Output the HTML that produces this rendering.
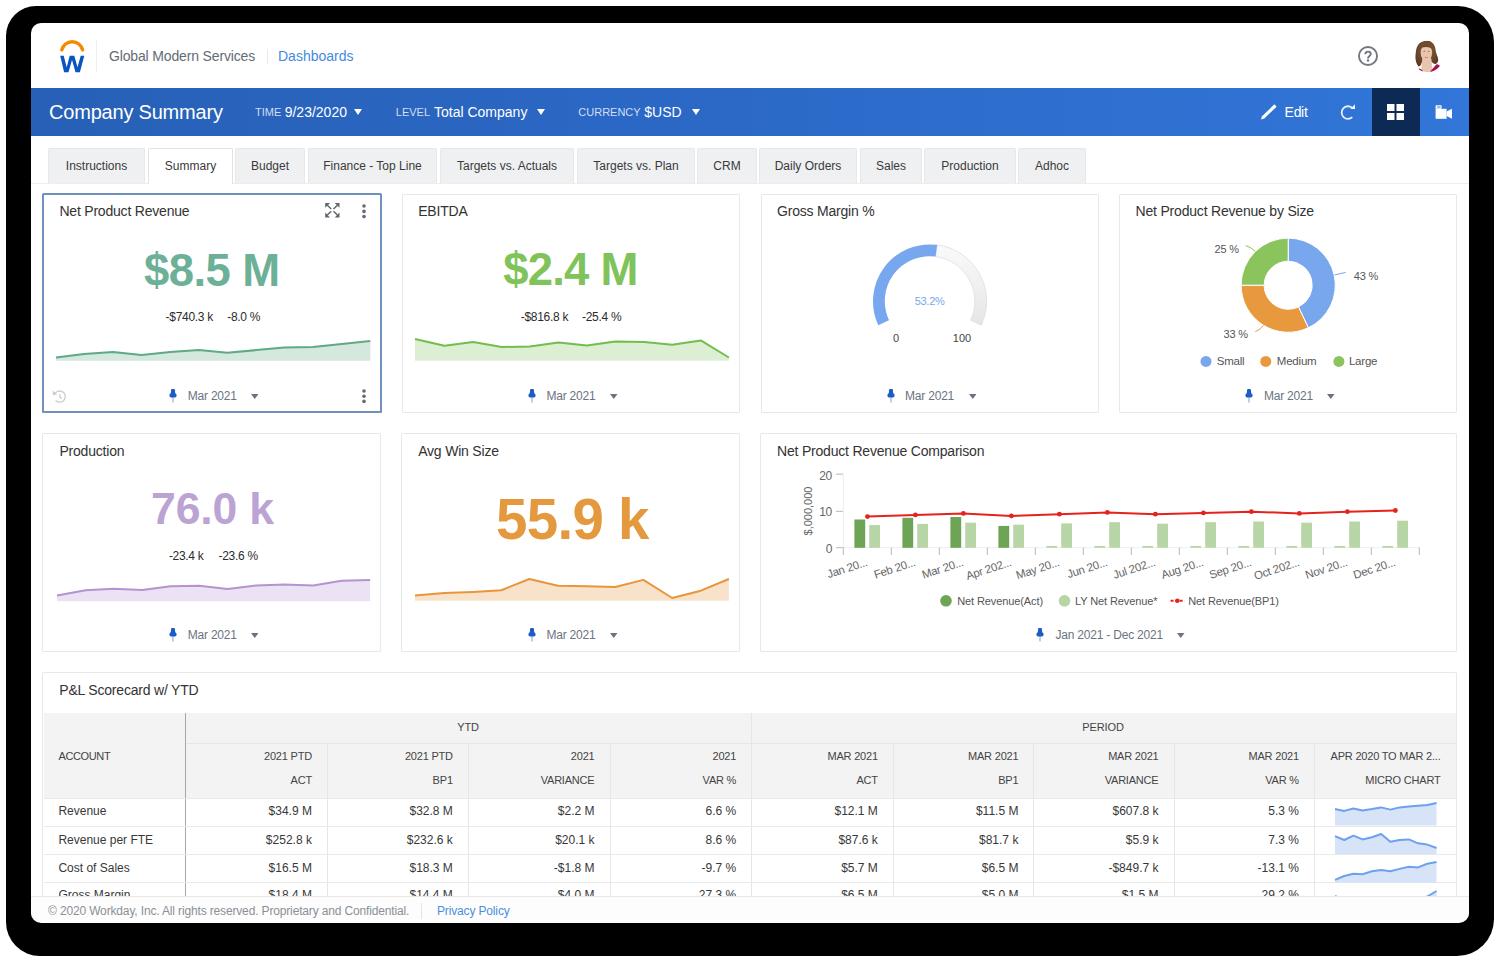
<!DOCTYPE html>
<html><head><meta charset="utf-8">
<style>
*{box-sizing:border-box;margin:0;padding:0}
html,body{width:1500px;height:962px;overflow:hidden;background:#fff;font-family:"Liberation Sans",sans-serif;}
.abs{position:absolute}
#frame{position:absolute;left:6.3px;top:6.4px;width:1487.3px;height:949.6px;background:#000;border-radius:30px 36px 37px 34px}
#win{position:absolute;left:31px;top:23px;width:1438px;height:899.5px;background:#fff;border-radius:10px;overflow:hidden}
.t{position:absolute;white-space:nowrap;line-height:1}
#bar{position:absolute;left:0;top:65px;width:1438px;height:48px;background:linear-gradient(90deg,#2760b6 0%,#2b67c4 40%,#3176d8 100%)}
.tab{position:absolute;top:125px;height:35px;background:#eff0f2;border:1px solid #e6e8eb;border-bottom:none;border-radius:2px 2px 0 0;font-size:12px;color:#3a3a3a;text-align:center;line-height:34.4px}
.tab.on{background:#fff;border-color:#e0e2e5;height:36px}
.card{position:absolute;background:#fff;border:1px solid #e6e8eb;border-radius:2px}
.ctitle{position:absolute;left:16px;top:10px;font-size:14px;color:#333;white-space:nowrap;line-height:16px}
.big{position:absolute;left:0;width:100%;text-align:center;font-weight:bold;white-space:nowrap;line-height:1}
.sub{position:absolute;left:0;width:100%;text-align:center;font-size:12px;color:#222;white-space:nowrap;line-height:14px;letter-spacing:-0.2px}
.foot{position:absolute;left:0;width:100%;text-align:center;font-size:12px;color:#6b737c;white-space:nowrap;line-height:14px}
</style></head><body>
<div id="frame"></div>
<div id="win">
  <!-- header -->
  <svg class="abs" style="left:25px;top:13px" width="34" height="40" viewBox="0 0 34 40">
    <path d="M5.8 13.9 A10.7 10.7 0 0 1 26.6 13.9" fill="none" stroke="#f38a00" stroke-width="3.4" stroke-linecap="round"/>
    <path d="M4.2 19.7 L7.7 19.7 L10.7 31.3 L13.7 19.7 L18.3 19.7 L21.5 31.3 L24.7 19.7 L28.3 19.7 L23.9 36.2 L19.5 36.2 L16 24 L12.5 36.2 L8.1 36.2 Z" fill="#0a56c0"/>
  </svg>
  <div class="abs" style="left:65px;top:17px;width:1px;height:32px;background:#eceef1"></div>
  <div class="t" style="left:78px;top:26px;font-size:14px;color:#636c75;letter-spacing:-0.15px">Global Modern Services</div>
  <div class="abs" style="left:236px;top:25.5px;width:1px;height:15px;background:#e8eaed"></div>
  <div class="t" style="left:247px;top:26px;font-size:14px;color:#3f8be0">Dashboards</div>

  <div id="bar"></div>
  <div class="t" style="left:18px;top:79px;font-size:20px;color:#fff;letter-spacing:-0.2px">Company Summary</div>
  <div class="t" style="left:224px;top:83.8px;font-size:11px;color:#d3def2">TIME</div>
  <div class="t" style="left:253.7px;top:81.9px;font-size:14px;color:#fff">9/23/2020</div>
  <svg class="abs" style="left:322.7px;top:86px" width="8" height="6"><path d="M0 0H8L4 6Z" fill="#fff"/></svg>
  <div class="t" style="left:364.8px;top:83.8px;font-size:11px;color:#d3def2">LEVEL</div>
  <div class="t" style="left:403px;top:81.9px;font-size:14px;color:#fff">Total Company</div>
  <svg class="abs" style="left:505.7px;top:86px" width="8" height="6"><path d="M0 0H8L4 6Z" fill="#fff"/></svg>
  <div class="t" style="left:547.3px;top:83.8px;font-size:11px;color:#d3def2">CURRENCY</div>
  <div class="t" style="left:613.3px;top:81.9px;font-size:14px;color:#fff">$USD</div>
  <svg class="abs" style="left:661.3px;top:86px" width="8" height="6"><path d="M0 0H8L4 6Z" fill="#fff"/></svg>
  <!-- pencil -->
  <svg class="abs" style="left:1228px;top:80.5px" width="18" height="18" viewBox="0 0 18 18"><path d="M2 15.5 L5.27 14.56 L17.61 2.65 L15.39 0.35 L3.05 12.26 Z" fill="#fff"/></svg>
  <div class="t" style="left:1253.6px;top:82.2px;font-size:14px;color:#fff;letter-spacing:-0.3px">Edit</div>
  <!-- refresh -->
  <svg class="abs" style="left:1309px;top:81px" width="16" height="16" viewBox="0 0 16 16"><path d="M12 3.7 A6.3 6.3 0 1 0 12.3 13.1" fill="none" stroke="#e6eefa" stroke-width="1.8"/><path d="M10.6 4.9 L15.1 4.9 L14.8 0.3 Z" fill="#fff"/></svg>
  <div class="abs" style="left:1340.7px;top:65px;width:48px;height:48px;background:#0d2a55"></div>
  <svg class="abs" style="left:1356.3px;top:81px" width="17" height="16" viewBox="0 0 17 16"><rect x="0" y="0" width="7.5" height="7" fill="#fff"/><rect x="9.5" y="0" width="7.5" height="7" fill="#fff"/><rect x="0" y="9" width="7.5" height="7" fill="#fff"/><rect x="9.5" y="9" width="7.5" height="7" fill="#fff"/></svg>
  <!-- camera -->
  <svg class="abs" style="left:1404.4px;top:81.8px" width="18" height="15" viewBox="0 0 18 15"><path d="M0.6 3.8 V1.2 C0.6 0.6 1 0.2 1.6 0.2 H5.8 C6.3 0.2 6.6 0.6 6.6 1 V3.8 Z" fill="#fff"/><rect x="0.6" y="3.8" width="11" height="10" fill="#fff"/><path d="M11.6 6.6 L17 3.8 V13.8 L11.6 11 Z" fill="#fff"/><rect x="2" y="1.2" width="3.6" height="1.6" fill="#3176d8" opacity="0.6"/></svg>
  <!-- help -->
  <svg class="abs" style="left:1326px;top:22px" width="22" height="22" viewBox="0 0 22 22"><circle cx="11" cy="11" r="9.05" fill="none" stroke="#707882" stroke-width="1.9"/><path d="M8.3 9.3 C8.3 7.6 9.5 6.6 11 6.6 C12.6 6.6 13.8 7.6 13.8 9.1 C13.8 10.9 11 11.3 11 13.4" fill="none" stroke="#707882" stroke-width="1.9"/><circle cx="11" cy="15.5" r="1.2" fill="#707882"/></svg>
  <!-- avatar -->
  <svg class="abs" style="left:1377px;top:13px" width="40" height="40" viewBox="0 0 40 40">
    <defs><clipPath id="av"><circle cx="19.5" cy="20.4" r="15.6"/></clipPath>
    <radialGradient id="hairg" cx="0.5" cy="0.4" r="0.6"><stop offset="0" stop-color="#8a623f"/><stop offset="1" stop-color="#5a3a22"/></radialGradient></defs>
    <g clip-path="url(#av)">
      <path d="M10.5 30.5 C7 26 7.2 21 7.8 16.5 C8.3 9 12.5 4.4 18.3 4.4 C24.2 4.4 27.2 9 27.6 14 C28 18.5 30.5 21 30.2 24.5 C29.8 27.8 27.5 28.3 25.5 27.6 L22 24.5 L14.5 24.5 C13.5 27.5 12.5 30.5 10.5 30.5 Z" fill="url(#hairg)"/>
      <path d="M14.3 22.5 L13 36 L24.5 36 L23.4 22.5 Z" fill="#e6c4ae"/>
      <ellipse cx="18.4" cy="16.9" rx="5.7" ry="8.3" fill="#e8c5ad"/>
      <path d="M12.8 12 C14 8 17 7.6 19.5 8 C22 8.5 23.5 10.5 24 13 C22 11 18 10 12.8 12 Z" fill="#6e4a2c"/>
      <path d="M22 36 L23.5 34 L28.5 28.2 C30.5 28.5 32 29.5 33 31 L33 36 Z" fill="#a5104d"/>
      <path d="M11 32.3 L14.6 34.3 L14.2 36 L10 36 Z" fill="#b3175d"/>
      <path d="M16.7 21.3 Q18.4 22 20.1 21.3" stroke="#c88479" stroke-width="1" fill="none"/>
      <ellipse cx="16.3" cy="15.3" rx="1" ry="0.55" fill="#8d6b5c"/><ellipse cx="20.6" cy="15.3" rx="1" ry="0.55" fill="#8d6b5c"/>
    </g>
  </svg>
  <!-- tabs -->
  <div class="abs" style="left:0;top:160px;width:1438px;height:1px;background:#ebedf0"></div>
  <div class="tab" style="left:17px;width:97px">Instructions</div>
  <div class="tab on" style="left:117px;width:85px">Summary</div>
  <div class="tab" style="left:204px;width:70px">Budget</div>
  <div class="tab" style="left:277px;width:129px">Finance - Top Line</div>
  <div class="tab" style="left:409px;width:134px">Targets vs. Actuals</div>
  <div class="tab" style="left:546px;width:118px">Targets vs. Plan</div>
  <div class="tab" style="left:666px;width:60px">CRM</div>
  <div class="tab" style="left:728px;width:98px">Daily Orders</div>
  <div class="tab" style="left:829px;width:62px">Sales</div>
  <div class="tab" style="left:893px;width:92px">Production</div>
  <div class="tab" style="left:987px;width:68px">Adhoc</div>
</div>
<div class="abs" style="left:41.9px;top:193.4px;width:340px;height:220px;background:#fff;border-radius:1.5px;box-shadow:inset 0 0 0 2px #7090bd"></div>
<div class="abs" style="left:401.5px;top:194.3px;width:338.6px;height:218.7px;background:#fff;border-radius:1.5px;box-shadow:inset 0 0 0 1px #e6e8eb"></div>
<div class="abs" style="left:760.5px;top:194.3px;width:338.3px;height:218.7px;background:#fff;border-radius:1.5px;box-shadow:inset 0 0 0 1px #e6e8eb"></div>
<div class="abs" style="left:1118.8px;top:194.3px;width:338.5px;height:218.7px;background:#fff;border-radius:1.5px;box-shadow:inset 0 0 0 1px #e6e8eb"></div>
<div class="abs" style="left:41.8px;top:433.2px;width:339.3px;height:218.5px;background:#fff;border-radius:1.5px;box-shadow:inset 0 0 0 1px #e6e8eb"></div>
<div class="abs" style="left:401.1px;top:433.2px;width:339.3px;height:218.5px;background:#fff;border-radius:1.5px;box-shadow:inset 0 0 0 1px #e6e8eb"></div>
<div class="abs" style="left:759.9px;top:433.2px;width:697.4px;height:218.5px;background:#fff;border-radius:1.5px;box-shadow:inset 0 0 0 1px #e6e8eb"></div>
<div class="abs" style="left:42.2px;top:672.2px;width:1415px;height:240px;background:#fff;border-radius:1.5px;box-shadow:inset 0 0 0 1px #e6e8eb"></div>
<div class="t" style="top:204.15px;font-size:14px;color:#333;letter-spacing:-0.2px;left:59.40px;">Net Product Revenue</div>
<svg class="abs" style="left:325px;top:203.4px" width="15" height="15" viewBox="0 0 15 15" fill="#5f6771" stroke="#5f6771"><path d="M0.2 0 H5 L0.2 4.8 Z" stroke="none"/><path d="M14.5 0 H9.7 L14.5 4.8 Z" stroke="none"/><path d="M0.2 14.4 V9.6 L5 14.4 Z" stroke="none"/><path d="M14.5 14.4 V9.6 L9.7 14.4 Z" stroke="none"/><path d="M2.3 2.3 L6.2 6.1 M12.4 2.3 L8.5 6.1 M2.3 12.1 L6.2 8.3 M12.4 12.1 L8.5 8.3" stroke-width="1.4" fill="none"/></svg>
<svg class="abs" style="left:361.2px;top:202.9px" width="6" height="16.599999999999994"><circle cx="3" cy="3.0" r="1.8" fill="#636b76"/><circle cx="3" cy="8.400000000000006" r="1.8" fill="#636b76"/><circle cx="3" cy="13.599999999999994" r="1.8" fill="#636b76"/></svg>
<div class="t" style="top:247.58px;font-size:45.5px;color:#6cb197;font-weight:700;letter-spacing:-0.6px;left:-288.20px;width:1000px;text-align:center;">$8.5 M</div>
<div class="t" style="top:310.84px;font-size:12px;color:#2b2b2b;letter-spacing:-0.3px;left:165.60px;">-$740.3 k</div>
<div class="t" style="top:310.84px;font-size:12px;color:#2b2b2b;letter-spacing:-0.3px;left:227.20px;">-8.0 %</div>
<svg class="abs" style="left:53.80px;top:338.30px" width="319.30" height="23.80"><polygon points="2.00,22.80 2.00,19.60 30.10,16.00 58.90,14.00 87.50,16.90 116.30,14.00 144.90,12.10 173.40,14.70 202.30,12.10 230.30,9.60 258.90,9.10 287.70,6.00 316.30,3.00 316.30,22.80" fill="#d4e8de"/><polyline points="2.00,19.60 30.10,16.00 58.90,14.00 87.50,16.90 116.30,14.00 144.90,12.10 173.40,14.70 202.30,12.10 230.30,9.60 258.90,9.10 287.70,6.00 316.30,3.00" fill="none" stroke="#5fa985" stroke-width="2" stroke-linejoin="round"/></svg>
<svg class="abs" style="left:52px;top:389px" width="15" height="15" viewBox="0 0 15 15"><path d="M3.2 4.2 A5.6 5.6 0 1 1 3.6 11.5" fill="none" stroke="#c9cdd2" stroke-width="1.3"/><path d="M0.8 1.6 L5.2 5.4 L0.9 6.2 Z" fill="#c9cdd2"/><path d="M7.8 5 V8.3 L10 9.6" fill="none" stroke="#c9cdd2" stroke-width="1.2"/></svg>
<svg class="abs" style="left:168.89999999999998px;top:388.8px" width="8" height="14" viewBox="0 0 8 14"><path d="M2 1.2 Q2 0 3.2 0 H4.8 Q6 0 6 1.2 V3 Q6.2 4.6 7.2 5.3 Q7.7 5.8 7.6 6.7 Q7.4 8.4 6 8.4 H2 Q0.6 8.4 0.4 6.7 Q0.3 5.8 0.8 5.3 Q1.8 4.6 2 3 Z" fill="#1d5cc4"/><path d="M3.6 8.2 H4.4 V13.6 H3.6 Z" fill="#2c68c8" opacity="0.8"/></svg>
<div class="t" style="top:390.04px;font-size:12px;color:#6b7380;letter-spacing:-0.2px;left:187.70px;">Mar 2021</div>
<svg class="abs" style="left:250.9px;top:393.59999999999997px" width="7.5" height="5"><path d="M0 0H7.5L3.75 5Z" fill="#6b7380"/></svg>
<svg class="abs" style="left:361.2px;top:388.2px" width="6" height="16.400000000000034"><circle cx="3" cy="3.0" r="1.8" fill="#636b76"/><circle cx="3" cy="8.199999999999989" r="1.8" fill="#636b76"/><circle cx="3" cy="13.400000000000034" r="1.8" fill="#636b76"/></svg>
<div class="t" style="top:204.15px;font-size:14px;color:#333;letter-spacing:-0.2px;left:418.20px;">EBITDA</div>
<div class="t" style="top:247.48px;font-size:45.5px;color:#80c35a;font-weight:700;letter-spacing:-0.8px;left:70.40px;width:1000px;text-align:center;">$2.4 M</div>
<div class="t" style="top:310.84px;font-size:12px;color:#2b2b2b;letter-spacing:-0.3px;left:520.80px;">-$816.8 k</div>
<div class="t" style="top:310.84px;font-size:12px;color:#2b2b2b;letter-spacing:-0.3px;left:582.00px;">-25.4 %</div>
<svg class="abs" style="left:412.50px;top:336.40px" width="318.90" height="25.70"><polygon points="2.00,24.70 2.00,3.00 31.40,9.80 60.20,6.10 88.80,11.00 116.80,10.50 145.40,6.40 173.80,9.60 202.30,5.40 231.20,6.10 259.20,8.80 287.80,4.40 315.90,21.50 315.90,24.70" fill="#dcefd3"/><polyline points="2.00,3.00 31.40,9.80 60.20,6.10 88.80,11.00 116.80,10.50 145.40,6.40 173.80,9.60 202.30,5.40 231.20,6.10 259.20,8.80 287.80,4.40 315.90,21.50" fill="none" stroke="#72bd4d" stroke-width="2" stroke-linejoin="round"/></svg>
<svg class="abs" style="left:528.3000000000001px;top:388.8px" width="8" height="14" viewBox="0 0 8 14"><path d="M2 1.2 Q2 0 3.2 0 H4.8 Q6 0 6 1.2 V3 Q6.2 4.6 7.2 5.3 Q7.7 5.8 7.6 6.7 Q7.4 8.4 6 8.4 H2 Q0.6 8.4 0.4 6.7 Q0.3 5.8 0.8 5.3 Q1.8 4.6 2 3 Z" fill="#1d5cc4"/><path d="M3.6 8.2 H4.4 V13.6 H3.6 Z" fill="#2c68c8" opacity="0.8"/></svg>
<div class="t" style="top:390.04px;font-size:12px;color:#6b7380;letter-spacing:-0.2px;left:546.40px;">Mar 2021</div>
<svg class="abs" style="left:610.2px;top:393.59999999999997px" width="7.5" height="5"><path d="M0 0H7.5L3.75 5Z" fill="#6b7380"/></svg>
<div class="t" style="top:204.15px;font-size:14px;color:#333;letter-spacing:-0.2px;left:777.00px;">Gross Margin %</div>
<svg class="abs" style="left:0;top:0" width="1500" height="962"><defs><linearGradient id="gg" x1="0" y1="0" x2="0" y2="1"><stop offset="0" stop-color="#fafafa"/><stop offset="1" stop-color="#e6e6e6"/></linearGradient></defs><path d="M937.12 244.87 A56.8 56.8 0 0 1 981.28 325.20 L970.58 320.22 A45 45 0 0 0 935.60 256.57 Z" fill="url(#gg)" stroke="#dedede" stroke-width="0.8"/><path d="M878.32 325.20 A56.8 56.8 0 0 1 937.12 244.87 L935.60 256.57 A45 45 0 0 0 889.02 320.22 Z" fill="#77a7ee"/></svg>
<div class="t" style="top:295.69px;font-size:11px;color:#78a8ee;letter-spacing:-0.3px;left:429.60px;width:1000px;text-align:center;">53.2%</div>
<div class="t" style="top:332.69px;font-size:11px;color:#444;left:396.00px;width:1000px;text-align:center;">0</div>
<div class="t" style="top:332.69px;font-size:11px;color:#444;left:462.00px;width:1000px;text-align:center;">100</div>
<svg class="abs" style="left:887.2px;top:388.8px" width="8" height="14" viewBox="0 0 8 14"><path d="M2 1.2 Q2 0 3.2 0 H4.8 Q6 0 6 1.2 V3 Q6.2 4.6 7.2 5.3 Q7.7 5.8 7.6 6.7 Q7.4 8.4 6 8.4 H2 Q0.6 8.4 0.4 6.7 Q0.3 5.8 0.8 5.3 Q1.8 4.6 2 3 Z" fill="#1d5cc4"/><path d="M3.6 8.2 H4.4 V13.6 H3.6 Z" fill="#2c68c8" opacity="0.8"/></svg>
<div class="t" style="top:390.04px;font-size:12px;color:#6b7380;letter-spacing:-0.2px;left:905.00px;">Mar 2021</div>
<svg class="abs" style="left:968.7px;top:393.59999999999997px" width="7.5" height="5"><path d="M0 0H7.5L3.75 5Z" fill="#6b7380"/></svg>
<div class="t" style="top:204.15px;font-size:14px;color:#333;letter-spacing:-0.2px;left:1135.60px;">Net Product Revenue by Size</div>
<svg class="abs" style="left:0;top:0" width="1500" height="962"><path d="M1288.20 238.10 A47.1 47.1 0 0 1 1308.33 327.78 L1298.46 306.90 A24 24 0 0 0 1288.20 261.20 Z" fill="#78a7ee" stroke="#fff" stroke-width="1"/><path d="M1308.33 327.78 A47.1 47.1 0 0 1 1241.10 285.20 L1264.20 285.20 A24 24 0 0 0 1298.46 306.90 Z" fill="#e8993e" stroke="#fff" stroke-width="1"/><path d="M1241.10 285.20 A47.1 47.1 0 0 1 1288.20 238.10 L1288.20 261.20 A24 24 0 0 0 1264.20 285.20 Z" fill="#8bc35d" stroke="#fff" stroke-width="1"/><path d="M1245.6 245.6 Q1251 247 1255.3 251.4" fill="none" stroke="#8bc35d" stroke-width="1"/><path d="M1334.7 274.9 L1345.7 272.4" fill="none" stroke="#78a7ee" stroke-width="1"/><path d="M1255.3 331.6 Q1260 330 1263.4 325.4" fill="none" stroke="#e8993e" stroke-width="1"/><circle cx="1206" cy="361.4" r="5.5" fill="#78a7ee"/><circle cx="1265.8" cy="361.4" r="5.5" fill="#e8993e"/><circle cx="1338.9" cy="361.4" r="5.5" fill="#8bc35d"/></svg>
<div class="t" style="top:243.89px;font-size:11px;color:#555;letter-spacing:-0.2px;left:1214.50px;">25 %</div>
<div class="t" style="top:270.79px;font-size:11px;color:#555;letter-spacing:-0.2px;left:1353.80px;">43 %</div>
<div class="t" style="top:329.39px;font-size:11px;color:#555;letter-spacing:-0.2px;left:1223.60px;">33 %</div>
<div class="t" style="top:355.77px;font-size:11.5px;color:#555;letter-spacing:-0.2px;left:1216.70px;">Small</div>
<div class="t" style="top:355.77px;font-size:11.5px;color:#555;letter-spacing:-0.2px;left:1276.80px;">Medium</div>
<div class="t" style="top:355.77px;font-size:11.5px;color:#555;letter-spacing:-0.2px;left:1348.90px;">Large</div>
<svg class="abs" style="left:1245.3px;top:388.8px" width="8" height="14" viewBox="0 0 8 14"><path d="M2 1.2 Q2 0 3.2 0 H4.8 Q6 0 6 1.2 V3 Q6.2 4.6 7.2 5.3 Q7.7 5.8 7.6 6.7 Q7.4 8.4 6 8.4 H2 Q0.6 8.4 0.4 6.7 Q0.3 5.8 0.8 5.3 Q1.8 4.6 2 3 Z" fill="#1d5cc4"/><path d="M3.6 8.2 H4.4 V13.6 H3.6 Z" fill="#2c68c8" opacity="0.8"/></svg>
<div class="t" style="top:390.04px;font-size:12px;color:#6b7380;letter-spacing:-0.2px;left:1263.90px;">Mar 2021</div>
<svg class="abs" style="left:1327.4px;top:393.59999999999997px" width="7.5" height="5"><path d="M0 0H7.5L3.75 5Z" fill="#6b7380"/></svg>
<div class="t" style="top:443.65px;font-size:14px;color:#333;letter-spacing:-0.2px;left:59.40px;">Production</div>
<div class="t" style="top:487.43px;font-size:44.5px;color:#bba3d3;font-weight:700;letter-spacing:-0.15px;left:-287.50px;width:1000px;text-align:center;">76.0 k</div>
<div class="t" style="top:550.34px;font-size:12px;color:#2b2b2b;letter-spacing:-0.3px;left:168.90px;">-23.4 k</div>
<div class="t" style="top:550.34px;font-size:12px;color:#2b2b2b;letter-spacing:-0.3px;left:218.50px;">-23.6 %</div>
<svg class="abs" style="left:54.50px;top:576.90px" width="318.10" height="25.20"><polygon points="2.00,24.20 2.00,18.60 30.60,13.20 58.70,11.80 87.20,13.00 115.60,9.30 144.20,8.80 172.70,12.00 201.10,8.60 229.60,7.40 258.20,8.60 286.60,3.70 315.10,3.00 315.10,24.20" fill="#ebe2f3"/><polyline points="2.00,18.60 30.60,13.20 58.70,11.80 87.20,13.00 115.60,9.30 144.20,8.80 172.70,12.00 201.10,8.60 229.60,7.40 258.20,8.60 286.60,3.70 315.10,3.00" fill="none" stroke="#b593d0" stroke-width="2" stroke-linejoin="round"/></svg>
<svg class="abs" style="left:168.89999999999998px;top:627.8000000000001px" width="8" height="14" viewBox="0 0 8 14"><path d="M2 1.2 Q2 0 3.2 0 H4.8 Q6 0 6 1.2 V3 Q6.2 4.6 7.2 5.3 Q7.7 5.8 7.6 6.7 Q7.4 8.4 6 8.4 H2 Q0.6 8.4 0.4 6.7 Q0.3 5.8 0.8 5.3 Q1.8 4.6 2 3 Z" fill="#1d5cc4"/><path d="M3.6 8.2 H4.4 V13.6 H3.6 Z" fill="#2c68c8" opacity="0.8"/></svg>
<div class="t" style="top:629.04px;font-size:12px;color:#6b7380;letter-spacing:-0.2px;left:187.70px;">Mar 2021</div>
<svg class="abs" style="left:250.9px;top:632.6px" width="7.5" height="5"><path d="M0 0H7.5L3.75 5Z" fill="#6b7380"/></svg>
<div class="t" style="top:443.65px;font-size:14px;color:#333;letter-spacing:-0.2px;left:418.20px;">Avg Win Size</div>
<div class="t" style="top:491.57px;font-size:56.5px;color:#e4993e;font-weight:700;letter-spacing:-0.75px;left:72.40px;width:1000px;text-align:center;">55.9 k</div>
<svg class="abs" style="left:412.50px;top:576.40px" width="318.90" height="25.70"><polygon points="2.00,24.70 2.00,19.60 31.40,17.10 60.20,15.90 88.30,14.20 116.40,3.00 144.90,9.80 173.80,10.30 202.30,11.00 230.40,3.90 259.20,22.00 287.80,14.70 315.90,3.00 315.90,24.70" fill="#f8e2ca"/><polyline points="2.00,19.60 31.40,17.10 60.20,15.90 88.30,14.20 116.40,3.00 144.90,9.80 173.80,10.30 202.30,11.00 230.40,3.90 259.20,22.00 287.80,14.70 315.90,3.00" fill="none" stroke="#e8953b" stroke-width="2" stroke-linejoin="round"/></svg>
<svg class="abs" style="left:528.3000000000001px;top:627.8000000000001px" width="8" height="14" viewBox="0 0 8 14"><path d="M2 1.2 Q2 0 3.2 0 H4.8 Q6 0 6 1.2 V3 Q6.2 4.6 7.2 5.3 Q7.7 5.8 7.6 6.7 Q7.4 8.4 6 8.4 H2 Q0.6 8.4 0.4 6.7 Q0.3 5.8 0.8 5.3 Q1.8 4.6 2 3 Z" fill="#1d5cc4"/><path d="M3.6 8.2 H4.4 V13.6 H3.6 Z" fill="#2c68c8" opacity="0.8"/></svg>
<div class="t" style="top:629.04px;font-size:12px;color:#6b7380;letter-spacing:-0.2px;left:546.40px;">Mar 2021</div>
<svg class="abs" style="left:610.2px;top:632.6px" width="7.5" height="5"><path d="M0 0H7.5L3.75 5Z" fill="#6b7380"/></svg>
<div class="t" style="top:443.65px;font-size:14px;color:#333;letter-spacing:-0.2px;left:777.00px;">Net Product Revenue Comparison</div>
<svg class="abs" style="left:0;top:0" width="1500" height="962">
<text x="807.8" y="511" transform="rotate(-90 807.8 511)" text-anchor="middle" dominant-baseline="central" font-family="Liberation Sans" font-size="11" fill="#666">$,000,000</text>
<text x="832" y="480.0" text-anchor="end" font-family="Liberation Sans" font-size="12" fill="#666" letter-spacing="-0.3">20</text>
<text x="832" y="516.0" text-anchor="end" font-family="Liberation Sans" font-size="12" fill="#666" letter-spacing="-0.3">10</text>
<text x="832" y="552.5" text-anchor="end" font-family="Liberation Sans" font-size="12" fill="#666" letter-spacing="-0.3">0</text>
<line x1="836" y1="474.2" x2="843.4" y2="474.2" stroke="#c4c4c4" stroke-width="1.2"/>
<line x1="836" y1="511.4" x2="843.4" y2="511.4" stroke="#c4c4c4" stroke-width="1.2"/>
<line x1="836" y1="547.6" x2="843.4" y2="547.6" stroke="#c4c4c4" stroke-width="1.2"/>
<line x1="843.4" y1="474" x2="843.4" y2="547.6" stroke="#efefef" stroke-width="1"/>
<line x1="843.4" y1="547.6" x2="1419.5" y2="547.6" stroke="#efefef" stroke-width="1"/>
<line x1="843.4" y1="547.6" x2="843.4" y2="555" stroke="#c4c4c4" stroke-width="1.2"/>
<line x1="891.4" y1="547.6" x2="891.4" y2="555" stroke="#c4c4c4" stroke-width="1.2"/>
<line x1="939.4" y1="547.6" x2="939.4" y2="555" stroke="#c4c4c4" stroke-width="1.2"/>
<line x1="987.4" y1="547.6" x2="987.4" y2="555" stroke="#c4c4c4" stroke-width="1.2"/>
<line x1="1035.4" y1="547.6" x2="1035.4" y2="555" stroke="#c4c4c4" stroke-width="1.2"/>
<line x1="1083.4" y1="547.6" x2="1083.4" y2="555" stroke="#c4c4c4" stroke-width="1.2"/>
<line x1="1131.4" y1="547.6" x2="1131.4" y2="555" stroke="#c4c4c4" stroke-width="1.2"/>
<line x1="1179.4" y1="547.6" x2="1179.4" y2="555" stroke="#c4c4c4" stroke-width="1.2"/>
<line x1="1227.4" y1="547.6" x2="1227.4" y2="555" stroke="#c4c4c4" stroke-width="1.2"/>
<line x1="1275.4" y1="547.6" x2="1275.4" y2="555" stroke="#c4c4c4" stroke-width="1.2"/>
<line x1="1323.4" y1="547.6" x2="1323.4" y2="555" stroke="#c4c4c4" stroke-width="1.2"/>
<line x1="1371.4" y1="547.6" x2="1371.4" y2="555" stroke="#c4c4c4" stroke-width="1.2"/>
<line x1="1419.4" y1="547.6" x2="1419.4" y2="555" stroke="#c4c4c4" stroke-width="1.2"/>
<rect x="854.40" y="519.5" width="10.8" height="28.30" fill="#6ea456"/>
<rect x="869.20" y="525.1" width="10.8" height="22.70" fill="#b8d5a5"/>
<text x="868.00" y="565.5" transform="rotate(-18 868.00 565.5)" text-anchor="end" font-family="Liberation Sans" font-size="11.5" fill="#666" letter-spacing="-0.3">Jan 20...</text>
<rect x="902.40" y="517.8" width="10.8" height="30.00" fill="#6ea456"/>
<rect x="917.20" y="523.9" width="10.8" height="23.90" fill="#b8d5a5"/>
<text x="916.00" y="565.5" transform="rotate(-18 916.00 565.5)" text-anchor="end" font-family="Liberation Sans" font-size="11.5" fill="#666" letter-spacing="-0.3">Feb 20...</text>
<rect x="950.40" y="517" width="10.8" height="30.80" fill="#6ea456"/>
<rect x="965.20" y="522.7" width="10.8" height="25.10" fill="#b8d5a5"/>
<text x="964.00" y="565.5" transform="rotate(-18 964.00 565.5)" text-anchor="end" font-family="Liberation Sans" font-size="11.5" fill="#666" letter-spacing="-0.3">Mar 20...</text>
<rect x="998.40" y="525.9" width="10.8" height="21.90" fill="#6ea456"/>
<rect x="1013.20" y="524.7" width="10.8" height="23.10" fill="#b8d5a5"/>
<text x="1012.00" y="565.5" transform="rotate(-18 1012.00 565.5)" text-anchor="end" font-family="Liberation Sans" font-size="11.5" fill="#666" letter-spacing="-0.3">Apr 202...</text>
<rect x="1046.40" y="546" width="10.8" height="1.80" fill="#bcd5a8"/>
<rect x="1061.20" y="523.4" width="10.8" height="24.40" fill="#b8d5a5"/>
<text x="1060.00" y="565.5" transform="rotate(-18 1060.00 565.5)" text-anchor="end" font-family="Liberation Sans" font-size="11.5" fill="#666" letter-spacing="-0.3">May 20...</text>
<rect x="1094.40" y="546" width="10.8" height="1.80" fill="#bcd5a8"/>
<rect x="1109.20" y="522.2" width="10.8" height="25.60" fill="#b8d5a5"/>
<text x="1108.00" y="565.5" transform="rotate(-18 1108.00 565.5)" text-anchor="end" font-family="Liberation Sans" font-size="11.5" fill="#666" letter-spacing="-0.3">Jun 20...</text>
<rect x="1142.40" y="546" width="10.8" height="1.80" fill="#bcd5a8"/>
<rect x="1157.20" y="523.7" width="10.8" height="24.10" fill="#b8d5a5"/>
<text x="1156.00" y="565.5" transform="rotate(-18 1156.00 565.5)" text-anchor="end" font-family="Liberation Sans" font-size="11.5" fill="#666" letter-spacing="-0.3">Jul 202...</text>
<rect x="1190.40" y="546" width="10.8" height="1.80" fill="#bcd5a8"/>
<rect x="1205.20" y="522.2" width="10.8" height="25.60" fill="#b8d5a5"/>
<text x="1204.00" y="565.5" transform="rotate(-18 1204.00 565.5)" text-anchor="end" font-family="Liberation Sans" font-size="11.5" fill="#666" letter-spacing="-0.3">Aug 20...</text>
<rect x="1238.40" y="546" width="10.8" height="1.80" fill="#bcd5a8"/>
<rect x="1253.20" y="521.5" width="10.8" height="26.30" fill="#b8d5a5"/>
<text x="1252.00" y="565.5" transform="rotate(-18 1252.00 565.5)" text-anchor="end" font-family="Liberation Sans" font-size="11.5" fill="#666" letter-spacing="-0.3">Sep 20...</text>
<rect x="1286.40" y="546" width="10.8" height="1.80" fill="#bcd5a8"/>
<rect x="1301.20" y="522.7" width="10.8" height="25.10" fill="#b8d5a5"/>
<text x="1300.00" y="565.5" transform="rotate(-18 1300.00 565.5)" text-anchor="end" font-family="Liberation Sans" font-size="11.5" fill="#666" letter-spacing="-0.3">Oct 202...</text>
<rect x="1334.40" y="546" width="10.8" height="1.80" fill="#bcd5a8"/>
<rect x="1349.20" y="521.5" width="10.8" height="26.30" fill="#b8d5a5"/>
<text x="1348.00" y="565.5" transform="rotate(-18 1348.00 565.5)" text-anchor="end" font-family="Liberation Sans" font-size="11.5" fill="#666" letter-spacing="-0.3">Nov 20...</text>
<rect x="1382.40" y="546" width="10.8" height="1.80" fill="#bcd5a8"/>
<rect x="1397.20" y="520.7" width="10.8" height="27.10" fill="#b8d5a5"/>
<text x="1396.00" y="565.5" transform="rotate(-18 1396.00 565.5)" text-anchor="end" font-family="Liberation Sans" font-size="11.5" fill="#666" letter-spacing="-0.3">Dec 20...</text>
<polyline points="867.40,516.6 915.40,514.9 963.40,513.4 1011.40,515.9 1059.40,514.2 1107.40,512.4 1155.40,514.2 1203.40,512.9 1251.40,511.7 1299.40,513.4 1347.40,511.7 1395.40,510.5" fill="none" stroke="#e5231d" stroke-width="2"/>
<circle cx="867.40" cy="516.6" r="2.4" fill="#e5231d"/>
<circle cx="915.40" cy="514.9" r="2.4" fill="#e5231d"/>
<circle cx="963.40" cy="513.4" r="2.4" fill="#e5231d"/>
<circle cx="1011.40" cy="515.9" r="2.4" fill="#e5231d"/>
<circle cx="1059.40" cy="514.2" r="2.4" fill="#e5231d"/>
<circle cx="1107.40" cy="512.4" r="2.4" fill="#e5231d"/>
<circle cx="1155.40" cy="514.2" r="2.4" fill="#e5231d"/>
<circle cx="1203.40" cy="512.9" r="2.4" fill="#e5231d"/>
<circle cx="1251.40" cy="511.7" r="2.4" fill="#e5231d"/>
<circle cx="1299.40" cy="513.4" r="2.4" fill="#e5231d"/>
<circle cx="1347.40" cy="511.7" r="2.4" fill="#e5231d"/>
<circle cx="1395.40" cy="510.5" r="2.4" fill="#e5231d"/>
<circle cx="946" cy="600.8" r="5.8" fill="#6ea456"/><circle cx="1064.5" cy="600.8" r="5.8" fill="#b5d5a3"/>
<line x1="1170.6" y1="600.8" x2="1184.2" y2="600.8" stroke="#e5231d" stroke-width="2" stroke-dasharray="3 1.5"/><circle cx="1177.4" cy="600.8" r="2.2" fill="#e5231d"/>
</svg>
<div class="t" style="top:595.89px;font-size:11px;color:#555;letter-spacing:-0.1px;left:957.20px;">Net Revenue(Act)</div>
<div class="t" style="top:595.89px;font-size:11px;color:#555;letter-spacing:-0.1px;left:1075.00px;">LY Net Revenue*</div>
<div class="t" style="top:595.89px;font-size:11px;color:#555;letter-spacing:-0.1px;left:1188.20px;">Net Revenue(BP1)</div>
<svg class="abs" style="left:1035.6000000000001px;top:627.8000000000001px" width="8" height="14" viewBox="0 0 8 14"><path d="M2 1.2 Q2 0 3.2 0 H4.8 Q6 0 6 1.2 V3 Q6.2 4.6 7.2 5.3 Q7.7 5.8 7.6 6.7 Q7.4 8.4 6 8.4 H2 Q0.6 8.4 0.4 6.7 Q0.3 5.8 0.8 5.3 Q1.8 4.6 2 3 Z" fill="#1d5cc4"/><path d="M3.6 8.2 H4.4 V13.6 H3.6 Z" fill="#2c68c8" opacity="0.8"/></svg>
<div class="t" style="top:629.04px;font-size:12px;color:#6b7380;letter-spacing:-0.2px;left:1055.40px;">Jan 2021 - Dec 2021</div>
<svg class="abs" style="left:1177px;top:632.6px" width="7.5" height="5"><path d="M0 0H7.5L3.75 5Z" fill="#6b7380"/></svg>
<div class="t" style="top:683.15px;font-size:14px;color:#333;letter-spacing:-0.2px;left:59.30px;">P&amp;L Scorecard w/ YTD</div>
<div class="abs" style="left:0;top:0;width:1500px;height:896.7px;overflow:hidden">
<div class="abs" style="left:43.5px;top:713px;width:1412.5px;height:85px;background:#f3f3f3"></div>
<div class="abs" style="left:185.4px;top:742.5px;width:1270.6px;height:1px;background:#e6e6e6"></div>
<div class="abs" style="left:326.9px;top:743px;width:1px;height:170px;background:#e6e6e6"></div>
<div class="abs" style="left:467.8px;top:743px;width:1px;height:170px;background:#e6e6e6"></div>
<div class="abs" style="left:609.5px;top:743px;width:1px;height:170px;background:#e6e6e6"></div>
<div class="abs" style="left:751.2px;top:743px;width:1px;height:170px;background:#e6e6e6"></div>
<div class="abs" style="left:892.8px;top:743px;width:1px;height:170px;background:#e6e6e6"></div>
<div class="abs" style="left:1033.4px;top:743px;width:1px;height:170px;background:#e6e6e6"></div>
<div class="abs" style="left:1173.5px;top:743px;width:1px;height:170px;background:#e6e6e6"></div>
<div class="abs" style="left:1313.9px;top:743px;width:1px;height:170px;background:#e6e6e6"></div>
<div class="abs" style="left:751.2px;top:713px;width:1px;height:30px;background:#e6e6e6"></div>
<div class="abs" style="left:184.6px;top:713px;width:1.7px;height:200px;background:#a6a6a6"></div>
<div class="abs" style="left:43.5px;top:797.8px;width:1412.5px;height:1px;background:#e9e9e9"></div>
<div class="abs" style="left:43.5px;top:826.2px;width:1412.5px;height:1px;background:#e9e9e9"></div>
<div class="abs" style="left:43.5px;top:854.0px;width:1412.5px;height:1px;background:#e9e9e9"></div>
<div class="abs" style="left:43.5px;top:881.8px;width:1412.5px;height:1px;background:#e9e9e9"></div>
<div class="t" style="top:721.69px;font-size:11px;color:#444;letter-spacing:-0.1px;left:-32.00px;width:1000px;text-align:center;">YTD</div>
<div class="t" style="top:721.69px;font-size:11px;color:#444;letter-spacing:-0.1px;left:603.00px;width:1000px;text-align:center;">PERIOD</div>
<div class="t" style="top:750.69px;font-size:11px;color:#444;letter-spacing:-0.35px;left:58.40px;">ACCOUNT</div>
<div class="t" style="top:750.69px;font-size:11px;color:#444;letter-spacing:-0.2px;left:-688.10px;width:1000px;text-align:right;">2021 PTD</div>
<div class="t" style="top:774.69px;font-size:11px;color:#444;letter-spacing:-0.2px;left:-688.10px;width:1000px;text-align:right;">ACT</div>
<div class="t" style="top:750.69px;font-size:11px;color:#444;letter-spacing:-0.2px;left:-547.20px;width:1000px;text-align:right;">2021 PTD</div>
<div class="t" style="top:774.69px;font-size:11px;color:#444;letter-spacing:-0.2px;left:-547.20px;width:1000px;text-align:right;">BP1</div>
<div class="t" style="top:750.69px;font-size:11px;color:#444;letter-spacing:-0.2px;left:-405.50px;width:1000px;text-align:right;">2021</div>
<div class="t" style="top:774.69px;font-size:11px;color:#444;letter-spacing:-0.2px;left:-405.50px;width:1000px;text-align:right;">VARIANCE</div>
<div class="t" style="top:750.69px;font-size:11px;color:#444;letter-spacing:-0.2px;left:-263.80px;width:1000px;text-align:right;">2021</div>
<div class="t" style="top:774.69px;font-size:11px;color:#444;letter-spacing:-0.2px;left:-263.80px;width:1000px;text-align:right;">VAR %</div>
<div class="t" style="top:750.69px;font-size:11px;color:#444;letter-spacing:-0.2px;left:-122.20px;width:1000px;text-align:right;">MAR 2021</div>
<div class="t" style="top:774.69px;font-size:11px;color:#444;letter-spacing:-0.2px;left:-122.20px;width:1000px;text-align:right;">ACT</div>
<div class="t" style="top:750.69px;font-size:11px;color:#444;letter-spacing:-0.2px;left:18.40px;width:1000px;text-align:right;">MAR 2021</div>
<div class="t" style="top:774.69px;font-size:11px;color:#444;letter-spacing:-0.2px;left:18.40px;width:1000px;text-align:right;">BP1</div>
<div class="t" style="top:750.69px;font-size:11px;color:#444;letter-spacing:-0.2px;left:158.50px;width:1000px;text-align:right;">MAR 2021</div>
<div class="t" style="top:774.69px;font-size:11px;color:#444;letter-spacing:-0.2px;left:158.50px;width:1000px;text-align:right;">VARIANCE</div>
<div class="t" style="top:750.69px;font-size:11px;color:#444;letter-spacing:-0.2px;left:298.90px;width:1000px;text-align:right;">MAR 2021</div>
<div class="t" style="top:774.69px;font-size:11px;color:#444;letter-spacing:-0.2px;left:298.90px;width:1000px;text-align:right;">VAR %</div>
<div class="t" style="top:750.69px;font-size:11px;color:#444;letter-spacing:-0.2px;left:440.50px;width:1000px;text-align:right;">APR 2020 TO MAR 2...</div>
<div class="t" style="top:774.69px;font-size:11px;color:#444;letter-spacing:-0.2px;left:440.50px;width:1000px;text-align:right;">MICRO CHART</div>
<div class="t" style="top:805.24px;font-size:12px;color:#383838;left:58.40px;">Revenue</div>
<div class="t" style="top:805.24px;font-size:12px;color:#383838;left:-688.10px;width:1000px;text-align:right;">$34.9 M</div>
<div class="t" style="top:805.24px;font-size:12px;color:#383838;left:-547.20px;width:1000px;text-align:right;">$32.8 M</div>
<div class="t" style="top:805.24px;font-size:12px;color:#383838;left:-405.50px;width:1000px;text-align:right;">$2.2 M</div>
<div class="t" style="top:805.24px;font-size:12px;color:#383838;left:-263.80px;width:1000px;text-align:right;">6.6 %</div>
<div class="t" style="top:805.24px;font-size:12px;color:#383838;left:-122.20px;width:1000px;text-align:right;">$12.1 M</div>
<div class="t" style="top:805.24px;font-size:12px;color:#383838;left:18.40px;width:1000px;text-align:right;">$11.5 M</div>
<div class="t" style="top:805.24px;font-size:12px;color:#383838;left:158.50px;width:1000px;text-align:right;">$607.8 k</div>
<div class="t" style="top:805.24px;font-size:12px;color:#383838;left:298.90px;width:1000px;text-align:right;">5.3 %</div>
<div class="t" style="top:834.04px;font-size:12px;color:#383838;left:58.40px;">Revenue per FTE</div>
<div class="t" style="top:834.04px;font-size:12px;color:#383838;left:-688.10px;width:1000px;text-align:right;">$252.8 k</div>
<div class="t" style="top:834.04px;font-size:12px;color:#383838;left:-547.20px;width:1000px;text-align:right;">$232.6 k</div>
<div class="t" style="top:834.04px;font-size:12px;color:#383838;left:-405.50px;width:1000px;text-align:right;">$20.1 k</div>
<div class="t" style="top:834.04px;font-size:12px;color:#383838;left:-263.80px;width:1000px;text-align:right;">8.6 %</div>
<div class="t" style="top:834.04px;font-size:12px;color:#383838;left:-122.20px;width:1000px;text-align:right;">$87.6 k</div>
<div class="t" style="top:834.04px;font-size:12px;color:#383838;left:18.40px;width:1000px;text-align:right;">$81.7 k</div>
<div class="t" style="top:834.04px;font-size:12px;color:#383838;left:158.50px;width:1000px;text-align:right;">$5.9 k</div>
<div class="t" style="top:834.04px;font-size:12px;color:#383838;left:298.90px;width:1000px;text-align:right;">7.3 %</div>
<div class="t" style="top:861.64px;font-size:12px;color:#383838;left:58.40px;">Cost of Sales</div>
<div class="t" style="top:861.64px;font-size:12px;color:#383838;left:-688.10px;width:1000px;text-align:right;">$16.5 M</div>
<div class="t" style="top:861.64px;font-size:12px;color:#383838;left:-547.20px;width:1000px;text-align:right;">$18.3 M</div>
<div class="t" style="top:861.64px;font-size:12px;color:#383838;left:-405.50px;width:1000px;text-align:right;">-$1.8 M</div>
<div class="t" style="top:861.64px;font-size:12px;color:#383838;left:-263.80px;width:1000px;text-align:right;">-9.7 %</div>
<div class="t" style="top:861.64px;font-size:12px;color:#383838;left:-122.20px;width:1000px;text-align:right;">$5.7 M</div>
<div class="t" style="top:861.64px;font-size:12px;color:#383838;left:18.40px;width:1000px;text-align:right;">$6.5 M</div>
<div class="t" style="top:861.64px;font-size:12px;color:#383838;left:158.50px;width:1000px;text-align:right;">-$849.7 k</div>
<div class="t" style="top:861.64px;font-size:12px;color:#383838;left:298.90px;width:1000px;text-align:right;">-13.1 %</div>
<div class="t" style="top:888.84px;font-size:12px;color:#383838;left:58.40px;">Gross Margin</div>
<div class="t" style="top:888.84px;font-size:12px;color:#383838;left:-688.10px;width:1000px;text-align:right;">$18.4 M</div>
<div class="t" style="top:888.84px;font-size:12px;color:#383838;left:-547.20px;width:1000px;text-align:right;">$14.4 M</div>
<div class="t" style="top:888.84px;font-size:12px;color:#383838;left:-405.50px;width:1000px;text-align:right;">$4.0 M</div>
<div class="t" style="top:888.84px;font-size:12px;color:#383838;left:-263.80px;width:1000px;text-align:right;">27.3 %</div>
<div class="t" style="top:888.84px;font-size:12px;color:#383838;left:-122.20px;width:1000px;text-align:right;">$6.5 M</div>
<div class="t" style="top:888.84px;font-size:12px;color:#383838;left:18.40px;width:1000px;text-align:right;">$5.0 M</div>
<div class="t" style="top:888.84px;font-size:12px;color:#383838;left:158.50px;width:1000px;text-align:right;">$1.5 M</div>
<div class="t" style="top:888.84px;font-size:12px;color:#383838;left:298.90px;width:1000px;text-align:right;">29.2 %</div>
<svg class="abs" style="left:1332.70px;top:799.90px" width="106.53" height="26.50"><polygon points="2.00,25.50 2.00,9.10 11.23,10.90 20.46,8.50 29.69,10.40 38.92,9.10 48.15,7.40 57.38,9.60 66.61,7.40 75.84,6.60 85.07,5.70 94.30,4.90 103.53,3.00 103.53,25.50" fill="#d7e4f8"/><polyline points="2.00,9.10 11.23,10.90 20.46,8.50 29.69,10.40 38.92,9.10 48.15,7.40 57.38,9.60 66.61,7.40 75.84,6.60 85.07,5.70 94.30,4.90 103.53,3.00" fill="none" stroke="#6da0ee" stroke-width="2" stroke-linejoin="round"/></svg>
<svg class="abs" style="left:1332.70px;top:831.30px" width="106.53" height="24.30"><polygon points="2.00,23.30 2.00,5.20 11.23,9.00 20.46,4.60 29.69,8.40 38.92,6.30 48.15,3.00 57.38,10.80 66.61,9.00 75.84,8.40 85.07,12.30 94.30,13.60 103.53,17.00 103.53,23.30" fill="#d7e4f8"/><polyline points="2.00,5.20 11.23,9.00 20.46,4.60 29.69,8.40 38.92,6.30 48.15,3.00 57.38,10.80 66.61,9.00 75.84,8.40 85.07,12.30 94.30,13.60 103.53,17.00" fill="none" stroke="#6da0ee" stroke-width="2" stroke-linejoin="round"/></svg>
<svg class="abs" style="left:1332.70px;top:858.80px" width="106.53" height="24.70"><polygon points="2.00,23.70 2.00,20.80 11.23,17.00 20.46,14.80 29.69,15.30 38.92,12.30 48.15,11.00 57.38,12.30 66.61,9.90 75.84,7.70 85.07,8.40 94.30,4.70 103.53,3.00 103.53,23.70" fill="#d7e4f8"/><polyline points="2.00,20.80 11.23,17.00 20.46,14.80 29.69,15.30 38.92,12.30 48.15,11.00 57.38,12.30 66.61,9.90 75.84,7.70 85.07,8.40 94.30,4.70 103.53,3.00" fill="none" stroke="#6da0ee" stroke-width="2" stroke-linejoin="round"/></svg>
<svg class="abs" style="left:1332.70px;top:888.00px" width="106.53" height="23.70"><polygon points="2.00,22.70 2.00,8.00 11.23,12.00 20.46,13.00 29.69,14.00 38.92,15.00 48.15,14.00 57.38,16.00 66.61,15.00 75.84,14.00 85.07,12.00 94.30,8.50 103.53,3.00 103.53,22.70" fill="#d7e4f8"/><polyline points="2.00,8.00 11.23,12.00 20.46,13.00 29.69,14.00 38.92,15.00 48.15,14.00 57.38,16.00 66.61,15.00 75.84,14.00 85.07,12.00 94.30,8.50 103.53,3.00" fill="none" stroke="#6da0ee" stroke-width="2" stroke-linejoin="round"/></svg>
</div>
<div class="abs" style="left:31px;top:896.2px;width:1438px;height:1px;background:#e8e8e8"></div>
<div class="abs" style="left:31px;top:896.7px;width:1438px;height:25.3px;background:#fdfdfd;border-radius:0 0 10px 10px"></div>
<div class="t" style="top:904.64px;font-size:12px;color:#8b9097;letter-spacing:-0.15px;left:48.00px;">© 2020 Workday, Inc. All rights reserved. Proprietary and Confidential.</div>
<div class="abs" style="left:421.2px;top:903px;width:1px;height:16px;background:#e4e4e4"></div>
<div class="t" style="top:904.64px;font-size:12px;color:#4a8fe0;letter-spacing:-0.15px;left:437.00px;">Privacy Policy</div>
</body></html>
